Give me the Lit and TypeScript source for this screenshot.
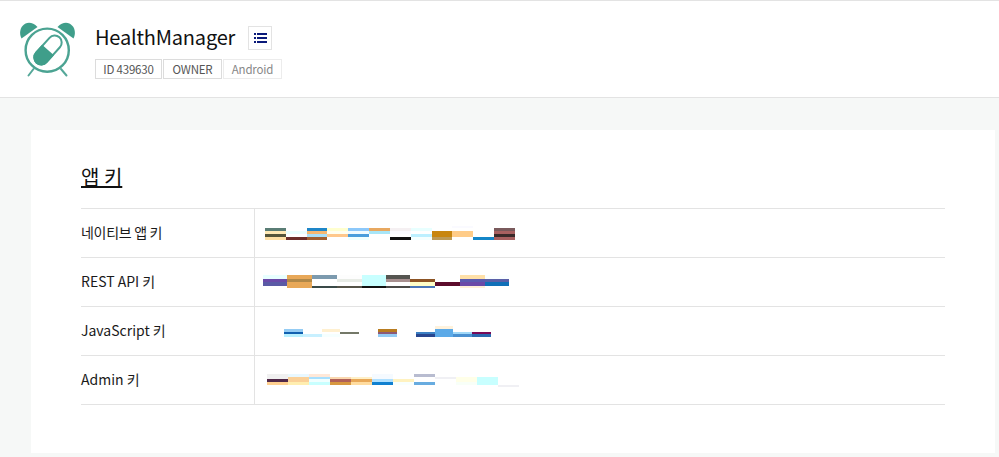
import { LitElement, html, css, svg } from "lit";
import { customElement } from "lit/decorators.js";

type Col = [number, number, [number, number, string][]];

const R1: Col[] = [
  [265, 21, [[228, 3, "#5a7d75"], [231, 3, "#ffe9b5"], [234, 3, "#55553a"], [237, 3, "#ffe0a5"]]],
  [286, 21, [[231, 3, "#e8ffff"], [237, 3, "#6b2f2a"]]],
  [307, 20, [[228, 3, "#1e86c8"], [231, 3, "#f5b870"], [234, 3, "#a8e0f8"], [237, 3, "#a05f30"]]],
  [327, 21, [[228, 3, "#ffffcf"], [231, 3, "#fffff0"], [234, 3, "#ffc88c"]]],
  [348, 21, [[228, 3, "#8cc8fa"], [231, 3, "#f0fbff"], [234, 3, "#4a9edc"], [237, 3, "#f0ffff"]]],
  [369, 21, [[228, 3, "#e8a860"], [231, 3, "#a8e6f8"]]],
  [390, 21, [[228, 3, "#f5f0f2"], [231, 3, "#fbfbff"], [237, 3, "#111111"]]],
  [411, 21, [[228, 3, "#e8ffff"], [234, 3, "#bdf0ff"], [237, 3, "#f5ffff"]]],
  [432, 20, [[231, 6, "#c8860f"], [237, 3, "#bd9a55"]]],
  [452, 21, [[226, 2, "#fafaff"], [231, 6, "#ffcc88"]]],
  [473, 21, [[237, 3, "#1486c8"]]],
  [494, 21, [[228, 3, "#7a5a5c"], [231, 3, "#a86060"], [234, 3, "#3a2a2a"], [237, 3, "#a86060"]]],
];
const R2: Col[] = [
  [263, 24, [[275, 4, "#e8ffff"], [279, 3, "#6a4aa8"], [282, 4, "#5a5aa5"]]],
  [287, 25, [[275, 4, "#e8a858"], [279, 3, "#b08848"], [282, 6, "#e8a858"]]],
  [312, 25, [[275, 4, "#7c9aae"], [286, 2, "#3a4a48"]]],
  [337, 25, [[275, 4, "#fdfdfd"], [279, 3, "#e8ece6"], [286, 2, "#555348"]]],
  [362, 24, [[275, 11, "#c8ffff"], [286, 2, "#111111"]]],
  [386, 24, [[275, 4, "#555550"], [279, 3, "#a89090"], [286, 2, "#4a4a48"]]],
  [410, 25, [[279, 3, "#8c5424"], [282, 4, "#ffffc8"], [286, 2, "#4a78b8"]]],
  [435, 25, [[282, 4, "#5c0c2c"]]],
  [460, 25, [[275, 4, "#ffe0a8"], [279, 3, "#5a5ab0"], [282, 4, "#6a4aa8"], [286, 2, "#fff0d8"]]],
  [485, 24, [[275, 4, "#fafeff"], [279, 3, "#5a60a8"], [282, 4, "#1070b8"]]],
];
const R3: Col[] = [
  [284, 19, [[329, 3, "#94ccf4"], [332, 2, "#1060b0"], [334, 3, "#b8f0ff"]]],
  [303, 19, [[334, 3, "#c8f0ff"]]],
  [322, 18, [[329, 3, "#fff0d0"], [334, 3, "#f5ffff"]]],
  [340, 19, [[332, 2, "#747868"]]],
  [378, 19, [[329, 3, "#b87c20"], [332, 2, "#8c5a78"], [334, 3, "#94ccf4"]]],
  [416, 19, [[332, 2, "#3c80c4"], [334, 3, "#28468f"]]],
  [435, 18, [[326, 3, "#fff2dc"], [329, 8, "#5caae8"]]],
  [453, 19, [[332, 2, "#a0d8f8"], [334, 3, "#4a90d0"]]],
  [472, 19, [[332, 2, "#780a58"], [334, 3, "#2a68b0"]]],
];
const R4: Col[] = [
  [267, 21, [[374, 5, "#f0f0f0"], [379, 3, "#502848"], [382, 3, "#ffd090"]]],
  [288, 21, [[374, 3, "#e8f8ff"], [377, 5, "#fad098"], [382, 3, "#ffeeb0"]]],
  [309, 21, [[374, 3, "#ffe8d8"], [377, 2, "#a8e0ff"], [379, 3, "#f0ffff"], [382, 3, "#c8ffff"]]],
  [330, 21, [[377, 2, "#fad8b0"], [379, 3, "#b06058"], [382, 3, "#d89840"]]],
  [351, 21, [[377, 2, "#fff0c8"], [379, 3, "#e8a858"], [382, 3, "#ffdca0"]]],
  [372, 21, [[374, 5, "#f5faff"], [379, 3, "#b0e0ff"], [382, 3, "#1080d0"]]],
  [393, 21, [[379, 3, "#fff2c0"], [382, 3, "#f8ffff"]]],
  [414, 21, [[374, 3, "#b8bcd0"], [382, 3, "#68ace0"]]],
  [435, 21, [[377, 2, "#f0f0f4"]]],
  [456, 21, [[377, 5, "#ffffe8"], [382, 3, "#f8fff8"]]],
  [477, 21, [[377, 8, "#c8ffff"]]],
  [498, 21, [[385, 2, "#f0f0f4"]]],
];

const ROWS: { label: string; cols: Col[]; top: number; ko?: boolean }[] = [
  { label: "네이티브 앱 키", cols: R1, top: 209, ko: true },
  { label: "REST API 키", cols: R2, top: 258 },
  { label: "JavaScript 키", cols: R3, top: 307 },
  { label: "Admin 키", cols: R4, top: 356 },
];

@customElement("app-root")
export class AppRoot extends LitElement {
  static styles = css`
    :host {
      display: block;
      width: 999px;
      height: 457px;
      overflow: hidden;
      background: #f6f8f7;
      font-family: "Noto Sans CJK KR", "Noto Sans", sans-serif;
      color: #222;
    }
    .header {
      height: 96px;
      background: #fff;
      border-top: 1px solid #e3e3e3;
      border-bottom: 1px solid #e3e3e3;
      display: flex;
      align-items: flex-start;
      padding-left: 19px;
    }
    .logo {
      width: 58px;
      height: 60px;
      margin-top: 19px;
      flex: none;
    }
    .info {
      margin-left: 18px;
      display: flex;
      flex-direction: column;
    }
    .title-row {
      display: flex;
      align-items: flex-start;
      margin-top: 24px;
      height: 26px;
    }
    h1 {
      margin: -1px 0 0 0;
      font-size: 20px;
      font-weight: 400;
      line-height: 26px;
      letter-spacing: -0.2px;
      color: #111;
    }
    .menu {
      width: 24px;
      height: 24px;
      box-sizing: border-box;
      margin-left: 13px;
      margin-top: 1px;
      border: 1px solid #e3e3e3;
      display: flex;
      align-items: center;
      justify-content: center;
    }
    .tags {
      display: flex;
      gap: 1px;
      margin-top: 8px;
    }
    .tag {
      height: 20px;
      box-sizing: border-box;
      border: 1px solid #dcdcdc;
      font-size: 11.5px;
      letter-spacing: -0.2px;
      line-height: 18px;
      text-align: center;
      width: 59px;
      color: #555;
    }
    .tag.id {
      width: 67px;
    }
    .tag.light {
      border-color: #ececec;
      color: #888;
    }
    .card {
      margin: 32px 4px 0 31px;
      height: 323px;
      box-sizing: border-box;
      background: #fff;
      padding: 30px 50px 0;
    }
    h2 {
      margin: 0;
      font-size: 20px;
      font-weight: 400;
      line-height: 34px;
      height: 48px;
      color: #111;
    }
    h2 span {
      text-decoration: underline;
      text-decoration-thickness: 2px;
      text-underline-offset: 1px;
    }
    .table {
      border-top: 1px solid #e3e3e3;
    }
    .row {
      display: flex;
      height: 49px;
      box-sizing: border-box;
      border-bottom: 1px solid #e3e3e3;
    }
    .label {
      width: 173px;
      flex: none;
      border-right: 1px solid #e3e3e3;
      font-size: 14px;
      line-height: 46px;
      color: #1a1a1a;
    }
    .label.ko {
      letter-spacing: -0.3px;
    }
    .value {
      flex: 1;
      height: 48px;
    }
    .value svg {
      display: block;
    }
  `;

  private mask(cols: Col[], top: number) {
    return html`<svg width="300" height="48" viewBox="255 ${top} 300 48" shape-rendering="crispEdges">
      ${cols.map(([x, w, bands]) =>
        bands.map(([y, h, c]) => svg`<rect x=${x} y=${y} width=${w} height=${h} fill=${c}></rect>`)
      )}
    </svg>`;
  }

  render() {
    return html`
      <div class="header">
        <svg class="logo" viewBox="19 20 58 60" fill="none">
          <g fill="#3f9e8a">
            <path d="M21.5 38.5C16 27 28 16.5 37.5 27Z" />
            <path d="M73.5 38.5C79 27 67 16.5 57.5 27Z" />
          </g>
          <circle cx="47.2" cy="50.2" r="21.6" stroke="#4ba392" stroke-width="2.4" />
          <path d="M33.5 69L28.5 75.5M61 69L66.5 75.5" stroke="#55a899" stroke-width="2" stroke-linecap="round" />
          <g transform="rotate(42 48 50)">
            <rect x="41" y="33" width="14" height="34" rx="7" stroke="#4ba392" stroke-width="2" />
            <path d="M40 50H56V60A8 8 0 0 1 40 60Z" fill="#3f9e8a" />
          </g>
        </svg>
        <div class="info">
          <div class="title-row">
            <h1>HealthManager</h1>
            <div class="menu">
              <svg width="13" height="10" viewBox="0 0 13 10" fill="#0a1a7a" shape-rendering="crispEdges">
                <rect x="0" y="0" width="2" height="2" />
                <rect x="3" y="0" width="10" height="2" />
                <rect x="0" y="4" width="2" height="2" />
                <rect x="3" y="4" width="10" height="2" />
                <rect x="0" y="8" width="2" height="2" />
                <rect x="3" y="8" width="10" height="2" />
              </svg>
            </div>
          </div>
          <div class="tags">
            <div class="tag id">ID 439630</div>
            <div class="tag">OWNER</div>
            <div class="tag light">Android</div>
          </div>
        </div>
      </div>
      <div class="card">
        <h2><span>앱 키</span></h2>
        <div class="table">
          ${ROWS.map(
            (r) => html`<div class="row">
              <div class="label ${r.ko ? "ko" : ""}">${r.label}</div>
              <div class="value">${this.mask(r.cols, r.top)}</div>
            </div>`
          )}
        </div>
      </div>
    `;
  }
}
